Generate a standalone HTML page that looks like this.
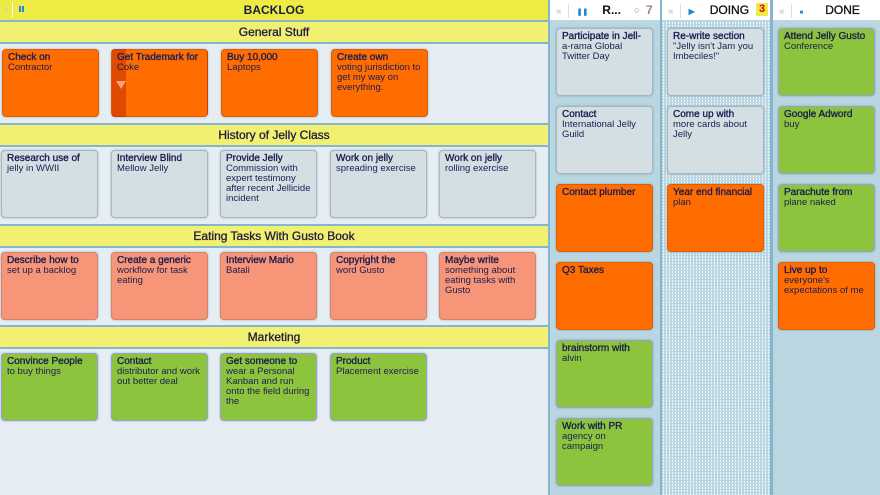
<!DOCTYPE html>
<html><head><meta charset="utf-8"><style>
*{margin:0;padding:0;box-sizing:border-box}
body{width:880px;height:495px;overflow:hidden;position:relative;background:#b9d6e1;font-family:"Liberation Sans",Arial,sans-serif;color:#1c1c50}
.a{position:absolute}
.bl{left:0;top:0;width:548px;height:495px;background:#e6eef4}
.hdr{height:20px;background:#eeeb44;font-size:12px;font-weight:bold;text-align:center;line-height:20px;color:#1c1c40}
.lane{height:20px;background:#f2f071;font-size:12px;text-align:center;line-height:20px;color:#1c1c40;-webkit-text-stroke:0.3px #1c1c40}
.sep{height:2px;background:#84b6d0}
.c{position:absolute;width:97px;height:68px;border-radius:4px;padding:3px 5px;font-size:9.5px;line-height:10px;border:1px solid rgba(0,0,0,.12);box-shadow:0 0 2px rgba(80,120,160,.5)}
.c b{font-weight:normal;-webkit-text-stroke:0.35px #1c1c50;font-size:10px;display:block;line-height:10px;white-space:nowrap}
.o{background:#ff6c00}.p{background:#f69577}.g{background:#d4dfe4;border-color:#a9b4bb}.gr{background:#8cc43d;border-color:#9aa0c8}
.ch{position:absolute;top:0;height:20px;background:#fff;font-size:12px;font-weight:bold;line-height:20px;color:#111}
.dots{background-color:#b9d6e1;background-image:linear-gradient(90deg,transparent 1px,#b9d6e1 1px),linear-gradient(#f4f8fa 0 2px,#b9d6e1 2px);background-size:3px 3px}
</style></head><body>
<div class="a bl">
<div class="hdr">BACKLOG</div>
<div class="a" style="left:3px;top:4px;color:#ccc;font-size:10px">«</div>
<div class="a" style="left:12px;top:3px;width:1px;height:14px;background:#fff"></div>
<div class="a" style="left:19px;top:6px;width:2px;height:6px;background:#1e8ad0"></div>
<div class="a" style="left:22px;top:6px;width:2px;height:6px;background:#1e8ad0"></div>
<div class="sep"></div><div class="lane">General Stuff</div><div class="sep"></div>
<div class="a" style="top:123px;left:0;width:548px"><div class="sep"></div><div class="lane">History of Jelly Class</div><div class="sep"></div></div>
<div class="a" style="top:224px;left:0;width:548px"><div class="sep"></div><div class="lane">Eating Tasks With Gusto Book</div><div class="sep"></div></div>
<div class="a" style="top:325px;left:0;width:548px"><div class="sep"></div><div class="lane">Marketing</div><div class="sep"></div></div>
</div>
<div class="a" style="left:548px;top:0;width:2px;height:495px;background:#84b6d0"></div>
<div class="a" style="left:660px;top:0;width:2px;height:495px;background:#84b6d0"></div>
<div class="a dots" style="left:663px;top:22px;width:107px;height:473px"></div>
<div class="a" style="left:770px;top:0;width:3px;height:495px;background:#84b6d0"></div>
<div class="ch" style="left:550px;width:110px"><span style="color:#ccc;font-size:10px;margin-left:6px">«</span><span style="display:inline-block;width:1px;height:14px;background:#ddd;margin:0 8px 0 6px;vertical-align:middle"></span><span style="color:#1e8ad0;font-size:7px">❚❚</span><span style="margin-left:14px">R...</span><span style="position:absolute;left:84px;color:#1e8ad0;font-size:9px;font-weight:normal">○</span><span style="position:absolute;left:96px;color:#a08070">7</span></div>
<div class="ch" style="left:662px;width:108px"><span style="color:#ccc;font-size:10px;margin-left:6px">«</span><span style="display:inline-block;width:1px;height:14px;background:#ddd;margin:0 8px 0 6px;vertical-align:middle"></span><span style="color:#1e8ad0;font-size:8px">▶</span><span style="margin-left:15px;font-weight:normal;-webkit-text-stroke:0.3px #111">DOING</span><span style="position:absolute;left:94px;top:3px;width:12px;height:13px;background:#eeeb44;color:#d00;line-height:13px;text-align:center;font-size:11px">3</span></div>
<div class="ch" style="left:773px;width:107px"><span style="color:#ccc;font-size:10px;margin-left:6px">«</span><span style="display:inline-block;width:1px;height:14px;background:#ddd;margin:0 8px 0 6px;vertical-align:middle"></span><span style="color:#1e8ad0;font-size:6px">■</span><span style="margin-left:22px;font-weight:normal;-webkit-text-stroke:0.3px #111">DONE</span></div>

<div class="c o" style="left:2px;top:49px"><b>Check on</b>Contractor</div>
<div class="c o" style="left:111px;top:49px;background:linear-gradient(90deg,#e04a00 0 14px,#ff6c00 14px)"><b>Get Trademark for</b>Coke<div class="a" style="left:4px;top:31px;width:0;height:0;border-left:5px solid transparent;border-right:5px solid transparent;border-top:8px solid #f5a080"></div></div>
<div class="c o" style="left:221px;top:49px"><b>Buy 10,000</b>Laptops</div>
<div class="c o" style="left:331px;top:49px"><b>Create own</b>voting jurisdiction to get my way on everything.</div>

<div class="c g" style="left:1px;top:150px"><b>Research use of</b>jelly in WWII</div>
<div class="c g" style="left:111px;top:150px"><b>Interview Blind</b>Mellow Jelly</div>
<div class="c g" style="left:220px;top:150px"><b>Provide Jelly</b>Commission with expert testimony after recent Jellicide incident</div>
<div class="c g" style="left:330px;top:150px"><b>Work on jelly</b>spreading exercise</div>
<div class="c g" style="left:439px;top:150px"><b>Work on jelly</b>rolling exercise</div>

<div class="c p" style="left:1px;top:252px"><b>Describe how to</b>set up a backlog</div>
<div class="c p" style="left:111px;top:252px"><b>Create a generic</b>workflow for task eating</div>
<div class="c p" style="left:220px;top:252px"><b>Interview Mario</b>Batali</div>
<div class="c p" style="left:330px;top:252px"><b>Copyright the</b>word Gusto</div>
<div class="c p" style="left:439px;top:252px"><b>Maybe write</b>something about eating tasks with Gusto</div>

<div class="c gr" style="left:1px;top:353px"><b>Convince People</b>to buy things</div>
<div class="c gr" style="left:111px;top:353px"><b>Contact</b>distributor and work out better deal</div>
<div class="c gr" style="left:220px;top:353px;overflow:hidden"><b>Get someone to</b>wear a Personal Kanban and run onto the field during the</div>
<div class="c gr" style="left:330px;top:353px"><b>Product</b>Placement exercise</div>

<div class="c g" style="left:556px;top:28px"><b>Participate in Jell-</b>a-rama Global Twitter Day</div>
<div class="c g" style="left:556px;top:106px"><b>Contact</b>International Jelly Guild</div>
<div class="c o" style="left:556px;top:184px"><b>Contact plumber</b></div>
<div class="c o" style="left:556px;top:262px"><b>Q3 Taxes</b></div>
<div class="c gr" style="left:556px;top:340px"><b>brainstorm with</b>alvin</div>
<div class="c gr" style="left:556px;top:418px"><b>Work with PR</b>agency on campaign</div>

<div class="c g" style="left:667px;top:28px"><b>Re-write section</b>"Jelly isn't Jam you Imbeciles!"</div>
<div class="c g" style="left:667px;top:106px"><b>Come up with</b>more cards about Jelly</div>
<div class="c o" style="left:667px;top:184px"><b>Year end financial</b>plan</div>

<div class="c gr" style="left:778px;top:28px"><b>Attend Jelly Gusto</b>Conference</div>
<div class="c gr" style="left:778px;top:106px"><b>Google Adword</b>buy</div>
<div class="c gr" style="left:778px;top:184px"><b>Parachute from</b>plane naked</div>
<div class="c o" style="left:778px;top:262px"><b>Live up to</b>everyone's expectations of me</div>
</body></html>
